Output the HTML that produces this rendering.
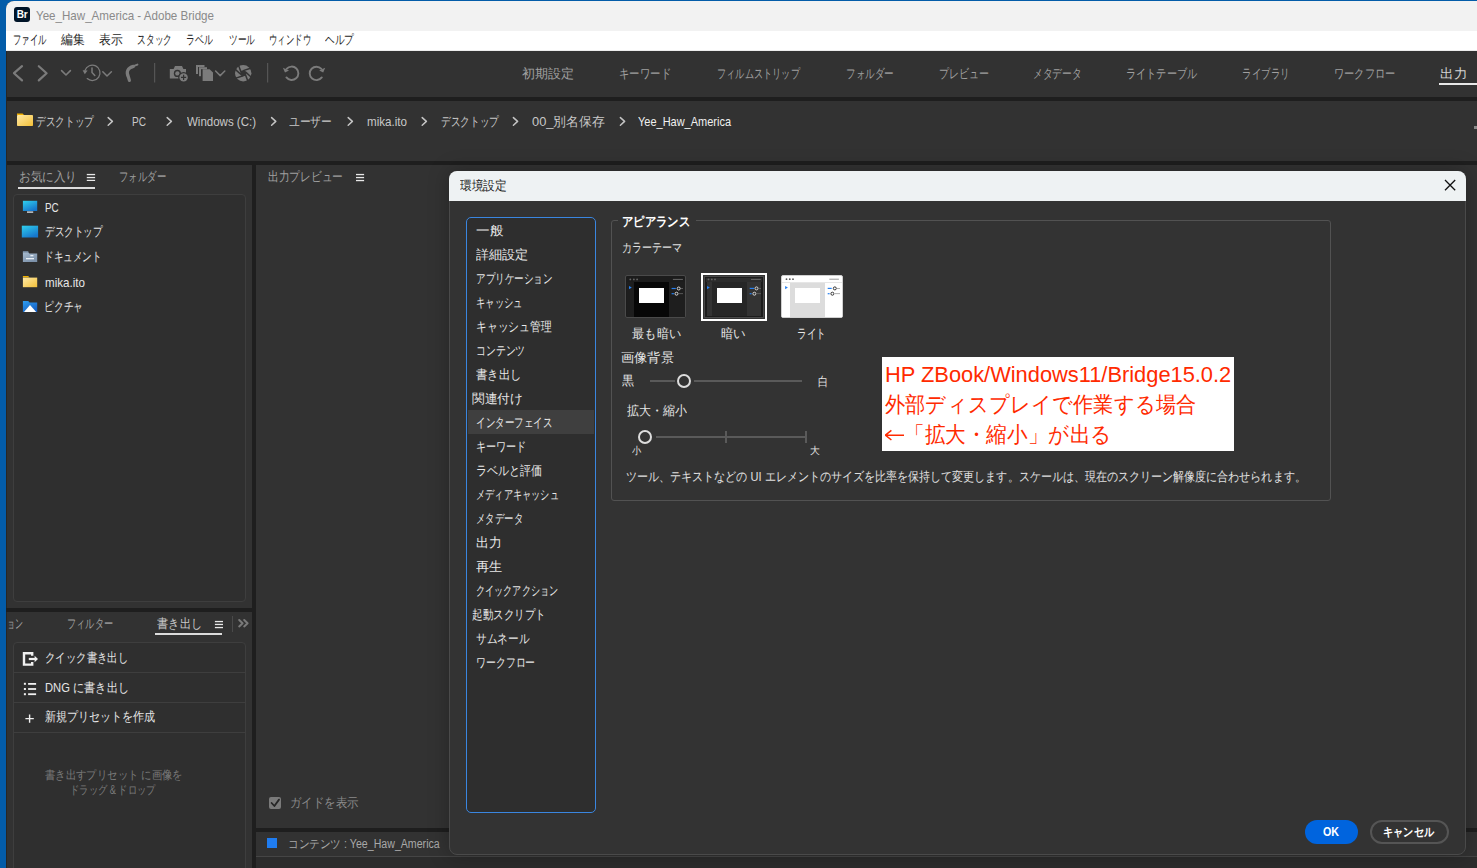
<!DOCTYPE html>
<html><head><meta charset="utf-8"><style>
html,body{margin:0;padding:0;width:1477px;height:868px;overflow:hidden;background:#323232}
body{position:relative;font-family:"Liberation Sans",sans-serif}
body>div,body>svg{position:absolute}
.t{white-space:nowrap;transform-origin:0 50%}
</style></head><body>
<div style='left:0px;top:0px;width:1477px;height:868px;background:#035ca9;'></div>
<div style='left:6px;top:1px;width:1471px;height:867px;background:#323232;border-top-left-radius:8px'></div>
<div style='left:6px;top:1px;width:1471px;height:30px;background:#f2f2f2;border-top-left-radius:8px'></div>
<div style='left:6px;top:31px;width:1471px;height:20px;background:#ffffff;'></div>
<div style='left:6px;top:50px;width:1471px;height:1px;background:#ececec;'></div>
<div style='left:14px;top:7px;width:16px;height:15px;background:#001428;border-radius:3px;color:#fff;font:bold 10px/15px "Liberation Sans",sans-serif;text-align:center;letter-spacing:-0.3px'>Br</div>
<div class='t' style='left:36.0px;top:7.5px;font-size:13px;line-height:16px;color:#8a8a8a;transform:scaleX(0.8913);'>Yee_Haw_America - Adobe Bridge</div>
<div class='t' style='left:12.5px;top:32.3px;font-size:13px;line-height:16px;color:#262626;transform:scaleX(0.6442);'>ファイル</div>
<div class='t' style='left:61.0px;top:32.3px;font-size:13px;line-height:16px;color:#262626;transform:scaleX(0.9077);'>編集</div>
<div class='t' style='left:99.0px;top:32.3px;font-size:13px;line-height:16px;color:#262626;transform:scaleX(0.9038);'>表示</div>
<div class='t' style='left:137.0px;top:32.3px;font-size:13px;line-height:16px;color:#262626;transform:scaleX(0.6731);'>スタック</div>
<div class='t' style='left:186.0px;top:32.3px;font-size:13px;line-height:16px;color:#262626;transform:scaleX(0.6923);'>ラベル</div>
<div class='t' style='left:228.5px;top:32.3px;font-size:13px;line-height:16px;color:#262626;transform:scaleX(0.6692);'>ツール</div>
<div class='t' style='left:269.0px;top:32.3px;font-size:13px;line-height:16px;color:#262626;transform:scaleX(0.6462);'>ウィンドウ</div>
<div class='t' style='left:325.0px;top:32.3px;font-size:13px;line-height:16px;color:#262626;transform:scaleX(0.7436);'>ヘルプ</div>
<div style='left:6px;top:97px;width:1471px;height:4px;background:#1e1e1e;'></div>
<div style='left:6px;top:161px;width:1471px;height:4px;background:#1e1e1e;'></div>
<div class='t' style='left:521.7px;top:65.5px;font-size:13px;line-height:16px;color:#a0a0a0;transform:scaleX(1.0000);'>初期設定</div>
<div class='t' style='left:619.0px;top:65.5px;font-size:13px;line-height:16px;color:#a0a0a0;transform:scaleX(0.8000);'>キーワード</div>
<div class='t' style='left:716.8px;top:65.5px;font-size:13px;line-height:16px;color:#a0a0a0;transform:scaleX(0.7068);'>フィルムストリップ</div>
<div class='t' style='left:845.5px;top:65.5px;font-size:13px;line-height:16px;color:#a0a0a0;transform:scaleX(0.7385);'>フォルダー</div>
<div class='t' style='left:939.0px;top:65.5px;font-size:13px;line-height:16px;color:#a0a0a0;transform:scaleX(0.7692);'>プレビュー</div>
<div class='t' style='left:1033.0px;top:65.5px;font-size:13px;line-height:16px;color:#a0a0a0;transform:scaleX(0.7477);'>メタデータ</div>
<div class='t' style='left:1125.8px;top:65.5px;font-size:13px;line-height:16px;color:#a0a0a0;transform:scaleX(0.7813);'>ライトテーブル</div>
<div class='t' style='left:1241.8px;top:65.5px;font-size:13px;line-height:16px;color:#a0a0a0;transform:scaleX(0.7338);'>ライブラリ</div>
<div class='t' style='left:1333.6px;top:65.5px;font-size:13px;line-height:16px;color:#a0a0a0;transform:scaleX(0.7859);'>ワークフロー</div>
<div class='t' style='left:1440.0px;top:65.5px;font-size:13px;line-height:16px;color:#d4d4d4;transform:scaleX(1.0385);'>出力</div>
<div style='left:1439px;top:83px;width:38px;height:2px;background:#e8e8e8;'></div>
<div class='t' style='left:36.0px;top:113.5px;font-size:13px;line-height:16px;color:#c8c8c8;transform:scaleX(0.7436);'>デスクトップ</div>
<div class='t' style='left:132.0px;top:113.5px;font-size:13px;line-height:16px;color:#c8c8c8;transform:scaleX(0.7751);'>PC</div>
<div class='t' style='left:187.0px;top:113.5px;font-size:13px;line-height:16px;color:#c8c8c8;transform:scaleX(0.8844);'>Windows (C:)</div>
<div class='t' style='left:289.0px;top:113.5px;font-size:13px;line-height:16px;color:#c8c8c8;transform:scaleX(0.8269);'>ユーザー</div>
<div class='t' style='left:367.0px;top:113.5px;font-size:13px;line-height:16px;color:#c8c8c8;transform:scaleX(0.8929);'>mika.ito</div>
<div class='t' style='left:441.0px;top:113.5px;font-size:13px;line-height:16px;color:#c8c8c8;transform:scaleX(0.7436);'>デスクトップ</div>
<div class='t' style='left:532.0px;top:113.5px;font-size:13px;line-height:16px;color:#c8c8c8;transform:scaleX(0.9905);'>00_別名保存</div>
<div class='t' style='left:638.0px;top:113.5px;font-size:13px;line-height:16px;color:#f0f0f0;transform:scaleX(0.8447);'>Yee_Haw_America</div>
<div style='left:252px;top:165px;width:4px;height:703px;background:#1e1e1e;'></div>
<div style='left:6px;top:51px;width:1px;height:817px;background:#262626;'></div>
<div class='t' style='left:19.0px;top:168.5px;font-size:13px;line-height:16px;color:#a0a0a0;transform:scaleX(0.8923);'>お気に入り</div>
<div class='t' style='left:119.0px;top:168.5px;font-size:13px;line-height:16px;color:#a0a0a0;transform:scaleX(0.7231);'>フォルダー</div>
<div style='left:18px;top:187px;width:77px;height:2px;background:#dcdcdc;'></div>
<div style='left:13px;top:194px;width:233px;height:408px;background:#2f2f2f;border:1px solid #3e3e3e;border-radius:4px;box-sizing:border-box'></div>
<div class='t' style='left:45.0px;top:200.0px;font-size:13px;line-height:16px;color:#e6e6e6;transform:scaleX(0.7585);'>PC</div>
<div class='t' style='left:44.6px;top:224.0px;font-size:13px;line-height:16px;color:#e6e6e6;transform:scaleX(0.7385);'>デスクトップ</div>
<div class='t' style='left:44.0px;top:249.4px;font-size:13px;line-height:16px;color:#e6e6e6;transform:scaleX(0.7385);'>ドキュメント</div>
<div class='t' style='left:45.0px;top:274.7px;font-size:13px;line-height:16px;color:#e6e6e6;transform:scaleX(0.8929);'>mika.ito</div>
<div class='t' style='left:44.0px;top:299.0px;font-size:13px;line-height:16px;color:#e6e6e6;transform:scaleX(0.7500);'>ピクチャ</div>
<div style='left:6px;top:608px;width:246px;height:4px;background:#1e1e1e;'></div>
<div class='t' style='left:7.0px;top:616.0px;font-size:13px;line-height:16px;color:#a0a0a0;transform:scaleX(0.6154);'>ョン</div>
<div class='t' style='left:67.0px;top:616.0px;font-size:13px;line-height:16px;color:#a0a0a0;transform:scaleX(0.7077);'>フィルター</div>
<div class='t' style='left:157.0px;top:616.0px;font-size:13px;line-height:16px;color:#c8c8c8;transform:scaleX(0.8654);'>書き出し</div>
<div style='left:155px;top:633px;width:67px;height:2px;background:#dcdcdc;'></div>
<div style='left:232px;top:616px;width:1px;height:16px;background:#4a4a4a;'></div>
<div style='left:13px;top:642px;width:233px;height:300px;background:#2f2f2f;border:1px solid #3e3e3e;border-radius:4px;box-sizing:border-box'></div>
<div style='left:14px;top:672px;width:231px;height:1px;background:#3e3e3e;'></div>
<div style='left:14px;top:702px;width:231px;height:1px;background:#3e3e3e;'></div>
<div style='left:14px;top:732px;width:231px;height:1px;background:#3e3e3e;'></div>
<div class='t' style='left:44.8px;top:650.0px;font-size:13px;line-height:16px;color:#e6e6e6;transform:scaleX(0.8000);'>クイック書き出し</div>
<div class='t' style='left:44.8px;top:679.7px;font-size:13px;line-height:16px;color:#e6e6e6;transform:scaleX(0.8605);'>DNG に書き出し</div>
<div class='t' style='left:44.8px;top:709.4px;font-size:13px;line-height:16px;color:#e6e6e6;transform:scaleX(0.8500);'>新規プリセットを作成</div>
<div class='t' style='left:44.8px;top:767.5px;font-size:12px;line-height:15px;color:#7a7a7a;transform:scaleX(0.8642);'>書き出すプリセット に画像を</div>
<div class='t' style='left:70.4px;top:782.5px;font-size:12px;line-height:15px;color:#7a7a7a;transform:scaleX(0.7735);'>ドラッグ &amp; ドロップ</div>
<div class='t' style='left:268.4px;top:169.0px;font-size:13px;line-height:16px;color:#a0a0a0;transform:scaleX(0.8253);'>出力プレビュー</div>
<div style='left:256px;top:828px;width:1221px;height:4px;background:#1e1e1e;'></div>
<div style='left:267px;top:838px;width:10px;height:10px;background:#1f7cf0;'></div>
<div class='t' style='left:288.3px;top:836.5px;font-size:12px;line-height:15px;color:#a8a8a8;transform:scaleX(0.8839);'>コンテンツ : Yee_Haw_America</div>
<div style='left:256px;top:856px;width:1221px;height:1px;background:#454545;'></div>
<div style='left:256px;top:857px;width:1221px;height:11px;background:#2c2c2c;'></div>
<div style='left:269px;top:797px;width:12px;height:12px;background:#7a7a7a;border-radius:2px'></div>
<div class='t' style='left:290.2px;top:794.7px;font-size:13px;line-height:16px;color:#8a8a8a;transform:scaleX(0.8756);'>ガイドを表示</div>
<div style='left:449px;top:171px;width:1017px;height:684px;background:#333333;border-radius:8px;box-shadow:0 0 20px 2px rgba(0,0,0,0.22);border:1px solid #4a4a4a;box-sizing:border-box'></div>
<div style='left:449px;top:171px;width:1017px;height:30px;background:#eef2f3;border-radius:8px 8px 0 0'></div>
<div class='t' style='left:459.5px;top:177.5px;font-size:13px;line-height:16px;color:#222222;transform:scaleX(0.9038);'>環境設定</div>
<div style='left:466px;top:217px;width:130px;height:596px;background:#2e2e2e;border:1.5px solid #3a86e0;border-radius:5px;box-sizing:border-box'></div>
<div style='left:468px;top:410px;width:126px;height:24px;background:#3f3f3f;'></div>
<div class='t' style='left:475.6px;top:222.5px;font-size:13px;line-height:16px;color:#e8e8e8;transform:scaleX(1.0462);'>一般</div>
<div class='t' style='left:475.6px;top:246.5px;font-size:13px;line-height:16px;color:#e8e8e8;transform:scaleX(1.0077);'>詳細設定</div>
<div class='t' style='left:475.6px;top:270.5px;font-size:13px;line-height:16px;color:#e8e8e8;transform:scaleX(0.7365);'>アプリケーション</div>
<div class='t' style='left:475.6px;top:294.5px;font-size:13px;line-height:16px;color:#e8e8e8;transform:scaleX(0.7185);'>キャッシュ</div>
<div class='t' style='left:475.6px;top:318.5px;font-size:13px;line-height:16px;color:#e8e8e8;transform:scaleX(0.8286);'>キャッシュ管理</div>
<div class='t' style='left:475.6px;top:342.5px;font-size:13px;line-height:16px;color:#e8e8e8;transform:scaleX(0.7585);'>コンテンツ</div>
<div class='t' style='left:475.6px;top:366.5px;font-size:13px;line-height:16px;color:#e8e8e8;transform:scaleX(0.8788);'>書き出し</div>
<div class='t' style='left:472.3px;top:390.5px;font-size:13px;line-height:16px;color:#e8e8e8;transform:scaleX(0.9750);'>関連付け</div>
<div class='t' style='left:476.0px;top:414.5px;font-size:13px;line-height:16px;color:#e8e8e8;transform:scaleX(0.7308);'>インターフェイス</div>
<div class='t' style='left:475.7px;top:438.5px;font-size:13px;line-height:16px;color:#e8e8e8;transform:scaleX(0.7785);'>キーワード</div>
<div class='t' style='left:475.7px;top:462.5px;font-size:13px;line-height:16px;color:#e8e8e8;transform:scaleX(0.8500);'>ラベルと評価</div>
<div class='t' style='left:475.7px;top:486.5px;font-size:13px;line-height:16px;color:#e8e8e8;transform:scaleX(0.7085);'>メディアキャッシュ</div>
<div class='t' style='left:475.7px;top:510.5px;font-size:13px;line-height:16px;color:#e8e8e8;transform:scaleX(0.7231);'>メタデータ</div>
<div class='t' style='left:475.7px;top:534.5px;font-size:13px;line-height:16px;color:#e8e8e8;transform:scaleX(0.9885);'>出力</div>
<div class='t' style='left:475.7px;top:558.5px;font-size:13px;line-height:16px;color:#e8e8e8;transform:scaleX(1.0115);'>再生</div>
<div class='t' style='left:475.7px;top:582.5px;font-size:13px;line-height:16px;color:#e8e8e8;transform:scaleX(0.7017);'>クイックアクション</div>
<div class='t' style='left:472.0px;top:606.5px;font-size:13px;line-height:16px;color:#e8e8e8;transform:scaleX(0.8088);'>起動スクリプト</div>
<div class='t' style='left:475.7px;top:630.5px;font-size:13px;line-height:16px;color:#e8e8e8;transform:scaleX(0.8200);'>サムネール</div>
<div class='t' style='left:475.7px;top:654.5px;font-size:13px;line-height:16px;color:#e8e8e8;transform:scaleX(0.7603);'>ワークフロー</div>
<div style='left:611px;top:220px;width:720px;height:281px;border:1px solid #525252;border-radius:3px;box-sizing:border-box'></div>
<div style='left:618px;top:215px;width:78px;height:10px;background:#333333;'></div>
<div class='t' style='left:621.8px;top:214.0px;font-size:13px;line-height:16px;color:#ffffff;font-weight:700;transform:scaleX(0.8744);'>アピアランス</div>
<div class='t' style='left:622.0px;top:239.7px;font-size:13px;line-height:16px;color:#e0e0e0;transform:scaleX(0.7692);'>カラーテーマ</div>
<div style='left:625px;top:275px;width:61px;height:43px;background:#1c1c1c;border:1px solid #4a4a4a;border-radius:2px;box-sizing:border-box'></div>
<div style='left:627px;top:282px;width:7px;height:35px;background:#1e1e1e;'></div>
<div style='left:634px;top:282px;width:35px;height:35px;background:#070707;'></div>
<div style='left:669px;top:282px;width:16px;height:35px;background:#1e1e1e;'></div>
<div style='left:639px;top:288px;width:25px;height:15px;background:#ffffff;'></div>
<div style='left:701px;top:273px;width:66px;height:48px;border:2.5px solid #ffffff;box-sizing:border-box'></div>
<div style='left:704px;top:276px;width:60px;height:42px;background:#1c1c1c;border:1px solid #4a4a4a;box-sizing:border-box'></div>
<div style='left:706px;top:278px;width:56px;height:4px;background:#2c2c2c;'></div>
<div style='left:707px;top:282px;width:5px;height:34px;background:#333333;'></div>
<div style='left:712px;top:282px;width:35px;height:34px;background:#262626;'></div>
<div style='left:747px;top:282px;width:14px;height:34px;background:#333333;'></div>
<div style='left:717px;top:288px;width:25px;height:15px;background:#ffffff;'></div>
<div style='left:781px;top:275px;width:62px;height:43px;background:#ffffff;border:1px solid #d0d0d0;border-radius:2px;box-sizing:border-box'></div>
<div style='left:782px;top:282px;width:8px;height:35px;background:#ffffff;'></div>
<div style='left:790px;top:282px;width:35px;height:35px;background:#dcdcdc;'></div>
<div style='left:825px;top:282px;width:17px;height:35px;background:#ffffff;'></div>
<div style='left:795px;top:288px;width:25px;height:15px;background:#ffffff;'></div>
<div style='left:782px;top:282px;width:60px;height:1px;background:#e6e6e6;'></div>
<div class='t' style='left:631.5px;top:326.3px;font-size:13px;line-height:16px;color:#e6e6e6;transform:scaleX(0.9442);'>最も暗い</div>
<div class='t' style='left:721.0px;top:326.3px;font-size:13px;line-height:16px;color:#e6e6e6;transform:scaleX(0.9615);'>暗い</div>
<div class='t' style='left:797.0px;top:326.3px;font-size:13px;line-height:16px;color:#e6e6e6;transform:scaleX(0.7436);'>ライト</div>
<div class='t' style='left:621.0px;top:349.7px;font-size:13px;line-height:16px;color:#e6e6e6;transform:scaleX(1.0192);'>画像背景</div>
<div class='t' style='left:622.0px;top:373.0px;font-size:13px;line-height:16px;color:#e6e6e6;transform:scaleX(0.9231);'>黒</div>
<div class='t' style='left:817.5px;top:373.5px;font-size:13px;line-height:16px;color:#e6e6e6;transform:scaleX(0.7769);'>白</div>
<div class='t' style='left:626.7px;top:402.6px;font-size:13px;line-height:16px;color:#e6e6e6;transform:scaleX(0.9215);'>拡大・縮小</div>
<div class='t' style='left:631.8px;top:445.0px;font-size:10px;line-height:12px;color:#e6e6e6;transform:scaleX(0.9200);'>小</div>
<div class='t' style='left:809.7px;top:445.0px;font-size:10px;line-height:12px;color:#e6e6e6;transform:scaleX(0.9800);'>大</div>
<div class='t' style='left:626.4px;top:468.5px;font-size:13px;line-height:16px;color:#e0e0e0;transform:scaleX(0.8493);'>ツール、テキストなどの UI エレメントのサイズを比率を保持して変更します。スケールは、現在のスクリーン解像度に合わせられます。</div>
<div style='left:650px;top:380px;width:25px;height:2px;background:#5a5a5a;'></div>
<div style='left:694px;top:380px;width:108px;height:2px;background:#5a5a5a;'></div>
<div style='left:677px;top:374px;width:14px;height:14px;border:2px solid #dddddd;border-radius:50%;box-sizing:border-box'></div>
<div style='left:656px;top:436px;width:151px;height:2px;background:#5a5a5a;'></div>
<div style='left:725px;top:431px;width:2px;height:12px;background:#5a5a5a;'></div>
<div style='left:805px;top:431px;width:2px;height:12px;background:#5a5a5a;'></div>
<div style='left:638px;top:430px;width:14px;height:14px;border:2px solid #dddddd;border-radius:50%;box-sizing:border-box'></div>
<div style='left:882px;top:357px;width:352px;height:94px;background:#ffffff;'></div>
<div class='t' style='left:884.8px;top:361.0px;font-size:22px;line-height:28px;color:#ff2a00;transform:scaleX(0.9922);'>HP ZBook/Windows11/Bridge15.0.2</div>
<div class='t' style='left:884.8px;top:391.0px;font-size:22px;line-height:28px;color:#ff2a00;transform:scaleX(0.9180);'>外部ディスプレイで作業する場合</div>
<div class='t' style='left:904.0px;top:421.0px;font-size:22px;line-height:28px;color:#ff2a00;transform:scaleX(0.9369);'>「拡大・縮小」が出る</div>
<div style='left:1305px;top:820px;width:53px;height:24px;background:#0064de;border-radius:12px'></div>
<div class='t' style='left:1323.0px;top:824.5px;font-size:12px;line-height:15px;color:#ffffff;font-weight:700;transform:scaleX(0.8889);'>OK</div>
<div style='left:1370px;top:820px;width:79px;height:24px;border:2px solid #555555;border-radius:12px;box-sizing:border-box'></div>
<div class='t' style='left:1383.0px;top:824.5px;font-size:12px;line-height:15px;color:#ffffff;font-weight:700;transform:scaleX(0.8500);'>キャンセル</div>
<svg style='position:absolute;left:1443px;top:178px' width='14' height='14'><path d='M2 2 L12.2 12.2 M12.2 2 L2 12.2' stroke='#111' stroke-width='1.3'/></svg>
<svg style='position:absolute;left:6px;top:51px' width='330' height='46' viewBox='6 51 330 46'>
<g fill='none' stroke='#7b7b7b' stroke-linecap='round' stroke-linejoin='round'>
<path d='M22 66.2 L14 73.2 L22 80.4' stroke-width='2.2'/>
<path d='M38.8 66.2 L46.6 73.2 L38.8 80.4' stroke-width='2.2'/>
<path d='M61.6 70.6 L66 75 L70.4 70.6' stroke-width='1.6'/>
<path d='M85 70.4 A7.7 7.7 0 1 1 87.2 78.6' stroke-width='1.3'/>
<path d='M92 68 L92 72.4 L94.8 75.4' stroke-width='1.5'/>
<path d='M102.8 71.8 L107 76 L111.4 71.8' stroke-width='1.5'/>
<path d='M129.4 80.4 L128.4 77 Q124.6 69 133.4 66.4' stroke-width='3.2'/><path d='M134.8 65.6 L137.4 64.6' stroke-width='2'/>
<path d='M215.6 71 L220.2 75.6 L224.8 71' stroke-width='1.5'/>
<path d='M286.4 77.4 A6.7 6.7 0 1 0 286.6 68.9' stroke-width='1.9'/>
<path d='M321.8 77.4 A6.7 6.7 0 1 1 321.4 68.9' stroke-width='1.9'/>
</g>
<path d='M82.6 70.2 L87.6 70.4 L84.8 74.2 Z' fill='#7b7b7b'/>
<path d='M282.9 67.8 L285 72.6 L289 70.6 Z' fill='#7b7b7b'/>
<path d='M325.2 67.8 L323.2 72.6 L319.2 70.6 Z' fill='#7b7b7b'/>
<rect x='154' y='63' width='1.2' height='19.5' fill='#555'/>
<rect x='267' y='63' width='1.2' height='19.5' fill='#555'/>
<path d='M169.8 69 L173.6 69 L175 66 L182 66 L183.4 69 L186 69 L186 78.6 L169.8 78.6 Z' fill='#7b7b7b'/>
<circle cx='177.4' cy='73.4' r='3.6' fill='#323232'/><circle cx='177.4' cy='73.4' r='2.2' fill='#7b7b7b'/>
<circle cx='183.6' cy='77.4' r='5.4' fill='#323232'/><circle cx='183.6' cy='77.4' r='4.2' fill='#7b7b7b'/>
<path d='M183.6 74.8 V80 M181 77.4 H186.2' stroke='#323232' stroke-width='1.2'/>
<rect x='196' y='65' width='8.5' height='9' fill='#7b7b7b'/><rect x='198' y='67' width='8' height='9' fill='#323232'/>
<rect x='199' y='67.2' width='8' height='9' fill='#7b7b7b'/><rect x='201' y='69.2' width='7' height='9' fill='#323232'/>
<path d='M202.6 69.2 L209.6 69.2 L213 72.6 L213 81 L202.6 81 Z' fill='#7b7b7b'/>
<circle cx='243.2' cy='73.2' r='8.2' fill='#7b7b7b'/>
<g stroke='#323232' stroke-width='1.5'>
<path d='M243.2 73.2 m-2.2 -1.3 L238.5 65.2'/><path d='M243.2 73.2 m0 -2.6 L250.6 68.3'/><path d='M243.2 73.2 m2.2 -1.3 L251.1 77'/>
<path d='M243.2 73.2 m2.2 1.3 L247.8 81'/><path d='M243.2 73.2 m0 2.6 L235.8 78.1'/><path d='M243.2 73.2 m-2.2 1.3 L235.3 69.4'/>
</g>
<circle cx='243.2' cy='73.2' r='3' fill='#323232'/>
</svg>
<svg style='position:absolute;left:6px;top:101px' width='700' height='60' viewBox='6 101 700 60'><path d='M108.2 117.6 L112.4 121.4 L108.2 125.2' fill='none' stroke='#c4c4c4' stroke-width='1.5' stroke-linecap='round' stroke-linejoin='round'/><path d='M167.2 117.6 L171.4 121.4 L167.2 125.2' fill='none' stroke='#c4c4c4' stroke-width='1.5' stroke-linecap='round' stroke-linejoin='round'/><path d='M271.6 117.6 L275.8 121.4 L271.6 125.2' fill='none' stroke='#c4c4c4' stroke-width='1.5' stroke-linecap='round' stroke-linejoin='round'/><path d='M348.2 117.6 L352.4 121.4 L348.2 125.2' fill='none' stroke='#c4c4c4' stroke-width='1.5' stroke-linecap='round' stroke-linejoin='round'/><path d='M422.2 117.6 L426.4 121.4 L422.2 125.2' fill='none' stroke='#c4c4c4' stroke-width='1.5' stroke-linecap='round' stroke-linejoin='round'/><path d='M513.4 117.6 L517.6 121.4 L513.4 125.2' fill='none' stroke='#c4c4c4' stroke-width='1.5' stroke-linecap='round' stroke-linejoin='round'/><path d='M620.4 117.6 L624.6 121.4 L620.4 125.2' fill='none' stroke='#c4c4c4' stroke-width='1.5' stroke-linecap='round' stroke-linejoin='round'/>
<defs><linearGradient id='fy' x1='0' y1='0' x2='1' y2='1'><stop offset='0' stop-color='#ffe9a6'/><stop offset='1' stop-color='#f3c038'/></linearGradient>
<linearGradient id='fb' x1='0' y1='0' x2='0.6' y2='1'><stop offset='0' stop-color='#30d0ee'/><stop offset='1' stop-color='#1676cc'/></linearGradient>
<linearGradient id='fg' x1='0' y1='0' x2='0.6' y2='1'><stop offset='0' stop-color='#a9bcd0'/><stop offset='1' stop-color='#7d92aa'/></linearGradient>
<linearGradient id='fp' x1='0' y1='0' x2='0.6' y2='1'><stop offset='0' stop-color='#2f9ef0'/><stop offset='1' stop-color='#1560c4'/></linearGradient></defs>
<path d='M17 113.4 L22.6 113.4 L24 115 L17 115 Z' fill='#f0b000'/>
<rect x='17' y='115' width='16' height='11' rx='0.8' fill='url(#fy)'/>
</svg>
<svg style='position:absolute;left:16px;top:196px' width='30' height='120' viewBox='16 196 30 120'>
<rect x='22.9' y='200.8' width='14.3' height='10.2' fill='url(#fb)'/><rect x='27' y='211.4' width='6.2' height='1.4' fill='#cfd8e0'/>
<rect x='21.8' y='225.7' width='16.3' height='11.8' fill='url(#fb)'/>
<path d='M22.9 252 L28 252 L29.4 253.6 L37.2 253.6 L37.2 262 L22.9 262 Z' fill='url(#fg)'/><path d='M22.9 251 L28 251 L29 252.4 L22.9 252.4Z' fill='#6e8094'/>
<rect x='30.4' y='255' width='3' height='1.3' fill='#e8eef4'/><rect x='26' y='258' width='8' height='1.3' fill='#e8eef4'/>
<path d='M22.9 275.9 L28.2 275.9 L29.6 277.6 L22.9 277.6Z' fill='#f0b000'/><rect x='22.9' y='277.6' width='14.3' height='9.6' fill='url(#fy)'/>
<path d='M22.9 301 L28.2 301 L29.6 302.6 L37.2 302.6 L37.2 312 L22.9 312 Z' fill='url(#fp)'/>
<path d='M24 312 L30 305 L36.2 312 Z' fill='#ffffff'/>
</svg>
<svg style='position:absolute;left:85px;top:172px' width='11' height='9' viewBox='85 172 11 9'><rect x='86.8' y='173.9' width='8.299999999999997' height='1.3' fill='#e8e8e8'/><rect x='86.8' y='176.9' width='8.299999999999997' height='1.3' fill='#e8e8e8'/><rect x='86.8' y='179.8' width='8.299999999999997' height='1.3' fill='#e8e8e8'/></svg>
<svg style='position:absolute;left:213px;top:619px' width='11' height='10' viewBox='213 619 11 10'><rect x='214.9' y='620.9' width='8.099999999999994' height='1.3' fill='#e8e8e8'/><rect x='214.9' y='623.8' width='8.099999999999994' height='1.3' fill='#e8e8e8'/><rect x='214.9' y='626.9' width='8.099999999999994' height='1.3' fill='#e8e8e8'/></svg>
<svg style='position:absolute;left:355px;top:172px' width='11' height='10' viewBox='355 172 11 10'><rect x='356' y='173.9' width='8.100000000000023' height='1.3' fill='#e8e8e8'/><rect x='356' y='176.9' width='8.100000000000023' height='1.3' fill='#e8e8e8'/><rect x='356' y='179.9' width='8.100000000000023' height='1.3' fill='#e8e8e8'/></svg>
<svg style='position:absolute;left:236px;top:616px' width='14' height='14' viewBox='236 616 14 14'><path d='M239.2 620 L242.6 623.2 L239.2 626.4 M244.2 620 L247.6 623.2 L244.2 626.4' fill='none' stroke='#7a7a7a' stroke-width='2' stroke-linecap='round' stroke-linejoin='round'/></svg>
<svg style='position:absolute;left:16px;top:646px' width='30' height='84' viewBox='16 646 30 84'>
<path d='M32.2 655.8 V653.2 H24 V664.6 H32.2 V662' fill='none' stroke='#f0f0f0' stroke-width='2.4'/>
<rect x='28.8' y='657.9' width='6.4' height='2.2' fill='#f0f0f0'/><path d='M34.6 655.8 L38 659 L34.6 662.2 Z' fill='#f0f0f0'/>
<rect x='23.9' y='682.8' width='2' height='2' fill='#f0f0f0'/><rect x='28.1' y='683' width='8' height='1.8' fill='#f0f0f0'/>
<rect x='23.9' y='688' width='2' height='2' fill='#f0f0f0'/><rect x='28.1' y='688.1' width='8' height='1.8' fill='#f0f0f0'/>
<rect x='23.9' y='693.2' width='2' height='2' fill='#f0f0f0'/><rect x='28.1' y='693.3' width='8' height='1.8' fill='#f0f0f0'/>
<path d='M29.6 714.4 V722.8 M25.4 718.6 H33.8' stroke='#f0f0f0' stroke-width='1.4'/>
</svg>
<svg style='position:absolute;left:266px;top:794px' width='18' height='18' viewBox='266 794 18 18'><path d='M271.6 803 L274.4 806 L279 799.6' fill='none' stroke='#262626' stroke-width='1.8' stroke-linecap='round' stroke-linejoin='round'/></svg>
<svg style='position:absolute;left:620px;top:270px' width='230' height='55' viewBox='620 270 230 55'><circle cx='630.3' cy='279.4' r='0.9' fill='#666'/><circle cx='633.9' cy='279.4' r='0.9' fill='#666'/><circle cx='637.1' cy='279.4' r='0.9' fill='#666'/><rect x='672.9' y='278.9' width='10.0' height='1' fill='#666'/><path d='M629 286 L631.8 287.6 L629 289.2 Z' fill='#2680f0'/><rect x='671.6' y='287.9' width='4.199999999999932' height='1.2' fill='#2680f0'/><rect x='681' y='288.1' width='2' height='0.8' fill='#666'/><circle cx='678.7' cy='288.5' r='1.5' fill='none' stroke='#d8d8d8' stroke-width='1'/><rect x='671.6' y='293.09999999999997' width='2.2999999999999545' height='1.2' fill='#2680f0'/><rect x='679' y='293.3' width='4' height='0.8' fill='#666'/><circle cx='676.5' cy='293.7' r='1.5' fill='none' stroke='#d8d8d8' stroke-width='1'/><circle cx='708.5' cy='279.4' r='0.9' fill='#666'/><circle cx='711.8' cy='279.4' r='0.9' fill='#666'/><circle cx='715' cy='279.4' r='0.9' fill='#666'/><rect x='751' y='278.9' width='9.799999999999955' height='1' fill='#666'/><path d='M707 286 L709.8 287.6 L707 289.2 Z' fill='#2680f0'/><rect x='749.7' y='287.79999999999995' width='4.2999999999999545' height='1.2' fill='#2680f0'/><rect x='759' y='288.0' width='2' height='0.8' fill='#666'/><circle cx='756.5' cy='288.4' r='1.5' fill='none' stroke='#d8d8d8' stroke-width='1'/><rect x='749.7' y='293.09999999999997' width='1.8999999999999773' height='1.2' fill='#2680f0'/><rect x='757' y='293.3' width='4' height='0.8' fill='#666'/><circle cx='754.4' cy='293.7' r='1.5' fill='none' stroke='#d8d8d8' stroke-width='1'/><circle cx='786.5' cy='279.2' r='0.9' fill='#555'/><circle cx='789.8' cy='279.2' r='0.9' fill='#555'/><circle cx='793' cy='279.2' r='0.9' fill='#555'/><rect x='829.3' y='278.7' width='9.600000000000023' height='1' fill='#999'/><path d='M785.1 286 L787.9 287.6 L785.1 289.2 Z' fill='#2680f0'/><rect x='827.7' y='287.79999999999995' width='4.0' height='1.2' fill='#2680f0'/><rect x='837' y='288.0' width='3' height='0.8' fill='#999'/><circle cx='834.8' cy='288.4' r='1.5' fill='none' stroke='#333' stroke-width='1'/><rect x='827.7' y='293.09999999999997' width='1.8999999999999773' height='1.2' fill='#2680f0'/><rect x='835' y='293.3' width='5' height='0.8' fill='#999'/><circle cx='832.4' cy='293.7' r='1.5' fill='none' stroke='#333' stroke-width='1'/></svg>
<svg style='position:absolute;left:880px;top:425px' width='28' height='20' viewBox='880 425 28 20'><path d='M885 435.2 H904 M885.4 435.2 L891.4 430.4 M885.4 435.2 L891.4 440' fill='none' stroke='#ff2a00' stroke-width='1.5'/></svg>
<div style='left:1474px;top:126px;width:3px;height:3px;background:#8a8a8a;'></div>
</body></html>
